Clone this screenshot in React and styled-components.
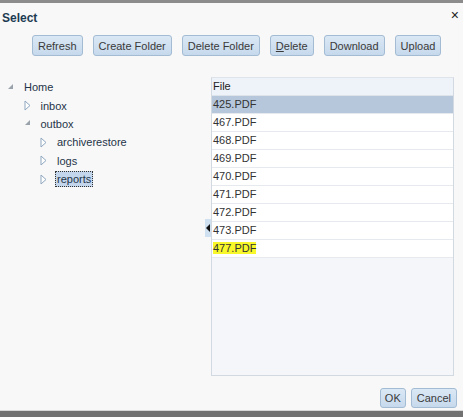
import React from 'react';
import styled, { createGlobalStyle } from 'styled-components';

const GlobalStyle = createGlobalStyle`
  html, body {
    margin: 0;
    padding: 0;
    background: #f8f8f8;
  }
  body {
    font-family: "Liberation Sans", Arial, sans-serif;
    font-size: 11px;
    color: #333;
  }
`;

const tree = [
  { name: 'Home', depth: 0, open: true },
  { name: 'inbox', depth: 1 },
  { name: 'outbox', depth: 1, open: true },
  { name: 'archiverestore', depth: 2 },
  { name: 'logs', depth: 2 },
  { name: 'reports', depth: 2, selected: true },
];

const files = ['425.PDF', '467.PDF', '468.PDF', '469.PDF', '470.PDF', '471.PDF', '472.PDF', '473.PDF', '477.PDF'];

function Expander({ open }) {
  if (open) {
    return (
      <svg width="7" height="7" viewBox="0 0 7 7">
        <path d="M6 1 L6 6 L1 6 Z" fill="#9aa3ab" />
      </svg>
    );
  }
  return (
    <svg width="7" height="11" viewBox="0 0 7 11">
      <path d="M1 1 L6 5.5 L1 10 Z" fill="#fff" stroke="#8fa7bf" strokeWidth="1" />
    </svg>
  );
}

export default function App() {
  return (
    <>
      <GlobalStyle />
      <Dialog>
        <TitleBar>
          <Title>Select</Title>
          <Close>×</Close>
        </TitleBar>

        <Toolbar>
          <Button>Refresh</Button>
          <Button>Create Folder</Button>
          <Button>Delete Folder</Button>
          <Button><u>D</u>elete</Button>
          <Button>Download</Button>
          <Button>Upload</Button>
        </Toolbar>

        <Body>
          <Tree>
            {tree.map((n) => (
              <TreeRow key={n.name} depth={n.depth}>
                <Toggle open={n.open}><Expander open={n.open} /></Toggle>
                <NodeLabel selected={n.selected}>{n.name}</NodeLabel>
              </TreeRow>
            ))}
          </Tree>

          <Splitter>
            <Handle>
              <svg width="4" height="8" viewBox="0 0 4 8">
                <path d="M4 0 L0 4 L4 8 Z" fill="#111" />
              </svg>
            </Handle>
          </Splitter>

          <Table>
            <HeaderRow>File</HeaderRow>
            {files.map((f, i) => (
              <FileRow key={f} selected={i === 0}>
                <FileName marked={f === '477.PDF'}>{f}</FileName>
              </FileRow>
            ))}
          </Table>
        </Body>

        <Footer>
          <Button narrow>OK</Button>
          <Button>Cancel</Button>
        </Footer>
      </Dialog>
    </>
  );
}

const Dialog = styled.div`
  width: 463px;
  height: 417px;
  box-sizing: border-box;
  border-top: 3px solid #8c8c8c;
  border-bottom: 6px solid #727272;
  background: #f8f8f8;
  display: flex;
  flex-direction: column;
  position: relative;
  &::after {
    content: '';
    position: absolute;
    left: 0;
    right: 0;
    bottom: 0;
    height: 1px;
    background: #d8d8d8;
  }
`;

const TitleBar = styled.div`
  height: 29px;
  display: flex;
  align-items: center;
  justify-content: space-between;
  padding: 0 4px 0 2px;
`;

const Title = styled.div`
  font-weight: bold;
  font-size: 12px;
  color: #1d3b52;
`;

const Close = styled.div`
  font-size: 14px;
  color: #222;
  margin-top: -5px;
`;

const Toolbar = styled.div`
  display: flex;
  gap: 10px;
  padding: 3px 0 0 32px;
  height: 45px;
  box-sizing: border-box;
`;

const Button = styled.button`
  height: 21px;
  padding: 0 ${(p) => (p.narrow ? 4 : 5)}px;
  font-family: inherit;
  font-size: 11px;
  color: #3a3a3a;
  border: 1px solid #a3bbd3;
  border-radius: 3px;
  background: linear-gradient(#dbe8f5, #c6d9ec);
  cursor: default;
  u {
    text-decoration: underline;
  }
`;

const Body = styled.div`
  display: flex;
  height: 299px;
`;

const Tree = styled.div`
  width: 205px;
  padding-top: 1px;
`;

const TreeRow = styled.div`
  display: flex;
  align-items: center;
  height: 18.4px;
  padding-left: ${(p) => 7 + p.depth * 16.5}px;
`;

const Toggle = styled.span`
  width: 17px;
  display: flex;
  align-items: center;
  margin-top: ${(p) => (p.open ? '-2px' : '0')};
`;

const NodeLabel = styled.span`
  color: #1f3448;
  padding: 1px 1px;
  border: 1px dotted ${(p) => (p.selected ? '#333' : 'transparent')};
  background: ${(p) => (p.selected ? '#c3d6ec' : 'transparent')};
  margin-left: -2px;
`;

const Splitter = styled.div`
  width: 6px;
  display: flex;
  align-items: center;
`;

const Handle = styled.div`
  width: 6px;
  height: 18px;
  margin-top: 3px;
  background: #cfe0f1;
  display: flex;
  align-items: center;
  justify-content: center;
`;

const Table = styled.div`
  width: 243px;
  border: 1px solid #d3d9e0;
  border-top-color: #dfe4ea;
  background: #f4f6f9;
  box-sizing: border-box;
`;

const HeaderRow = styled.div`
  height: 17px;
  line-height: 17px;
  padding-left: 1px;
  background: #eef3f9;
  border-bottom: 1px solid #dde3ea;
  color: #222;
`;

const FileRow = styled.div`
  height: 17px;
  line-height: 17px;
  padding-left: 1px;
  background: ${(p) => (p.selected ? '#b6c7dc' : '#fff')};
  border-bottom: 1px solid #e6e9ed;
`;

const FileName = styled.span`
  color: #333;
  background: ${(p) => (p.marked ? '#f7f72a' : 'transparent')};
`;

const Footer = styled.div`
  flex: 1;
  display: flex;
  justify-content: flex-end;
  gap: 5px;
  padding: 12px 6px 0 0;
  ${Button} {
    height: 20px;
  }
`;
